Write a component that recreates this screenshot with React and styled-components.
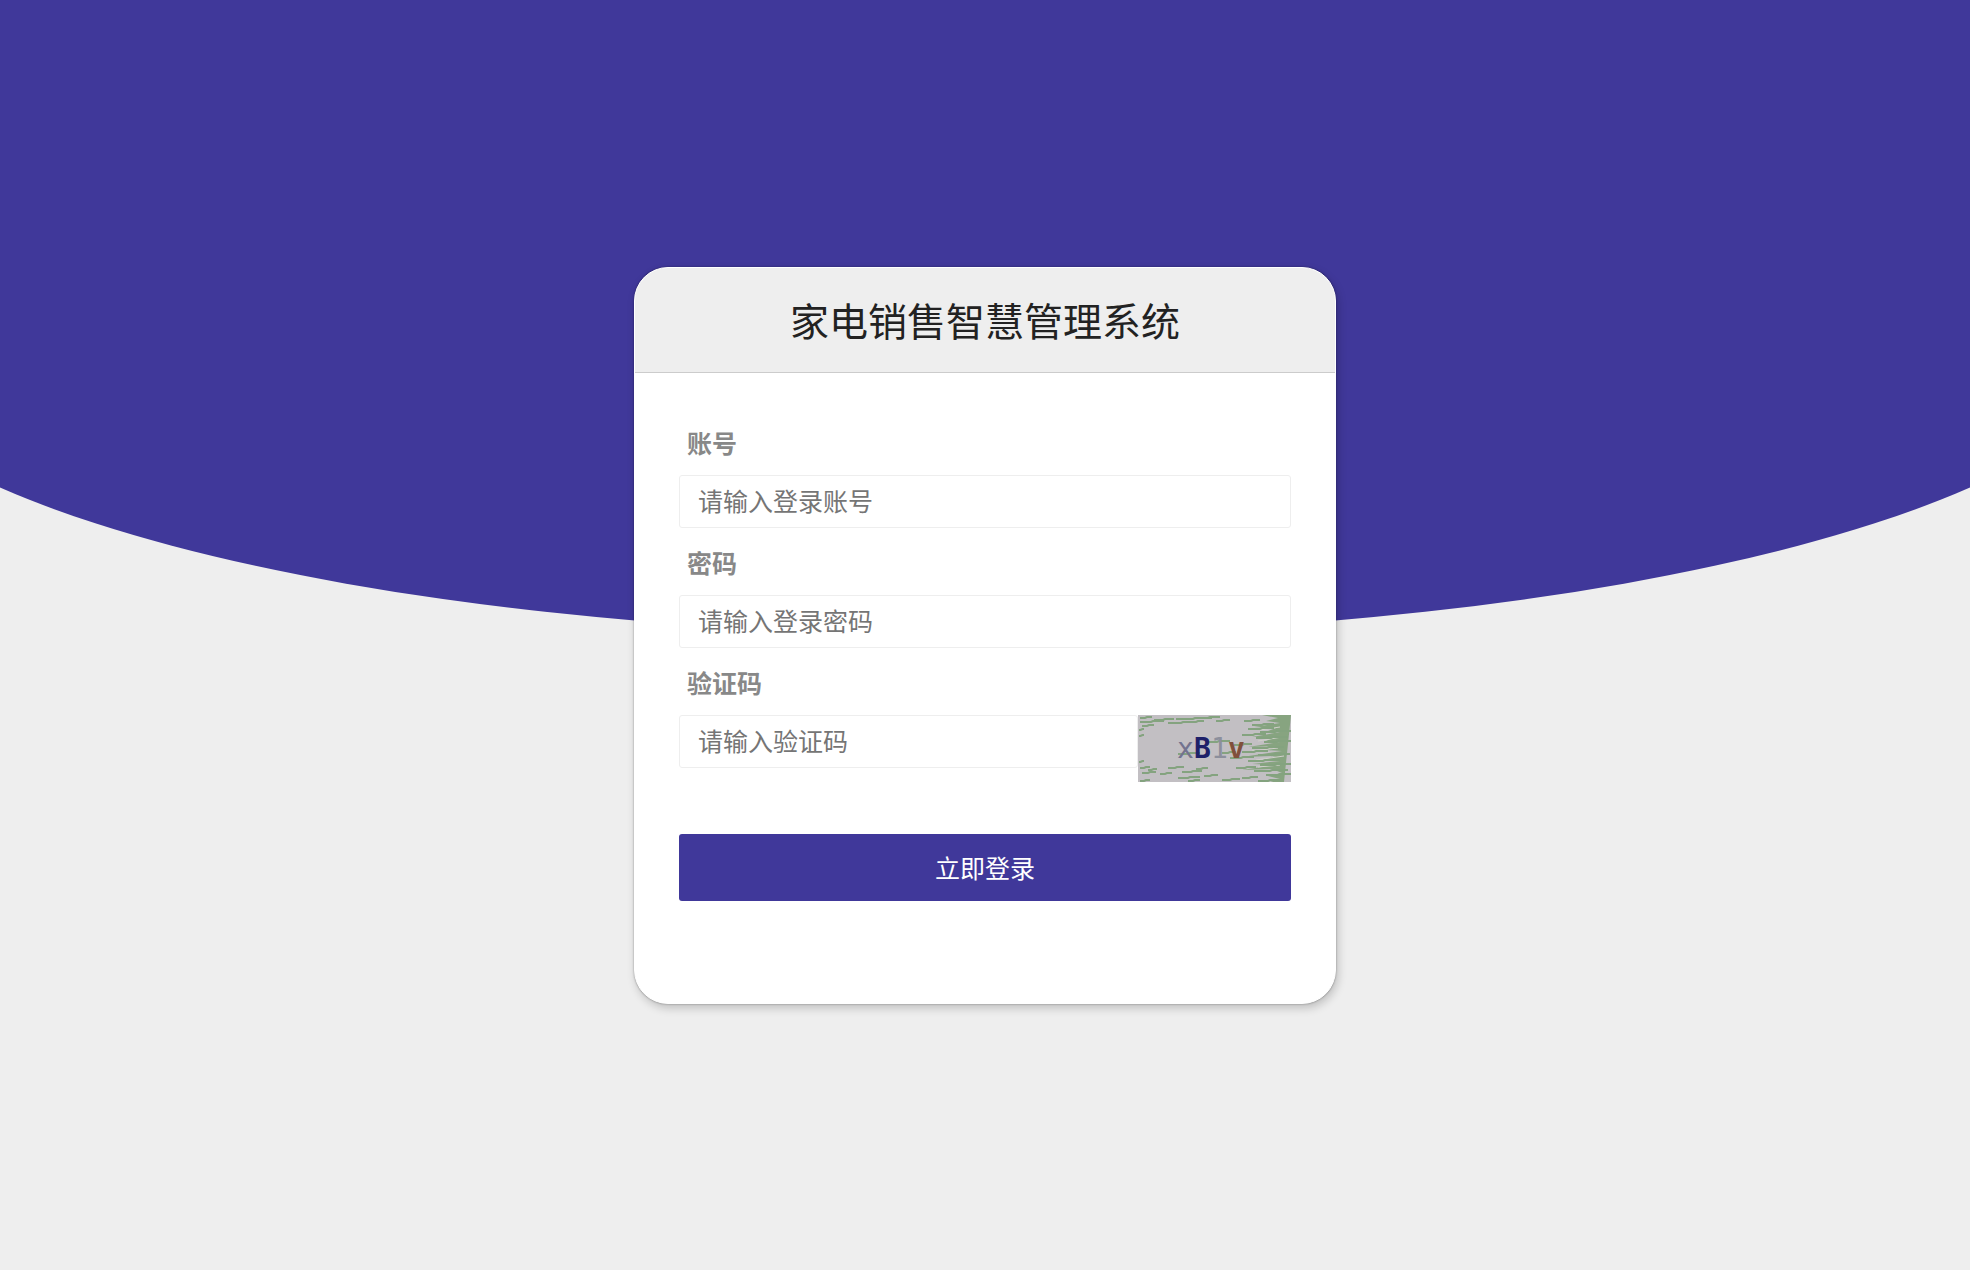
import React, { useState } from "react";
import styled, { createGlobalStyle } from "styled-components";

// Noise strokes of the captcha: [x, y, length]
const STREAKS = [
  [2, 2, 10], [2, 6, 22], [16, 4, 18], [30, 7, 26], [38, 3, 34], [52, 6, 12],
  [60, 2, 20], [4, 10, 10], [78, 5, 12], [106, 5, 14], [114, 9, 20],
  [110, 13, 24], [122, 16, 30], [104, 19, 22], [118, 22, 30], [126, 26, 26],
  [96, 29, 16], [114, 32, 30], [104, 36, 24], [120, 39, 30], [92, 42, 22],
  [110, 45, 30], [122, 49, 30], [98, 52, 18], [116, 55, 32], [128, 59, 24],
  [68, 26, 22], [40, 38, 20], [84, 37, 12], [2, 52, 8], [4, 57, 12],
  [10, 54, 7], [30, 52, 14], [22, 58, 10], [44, 56, 18], [58, 53, 10],
  [40, 62, 20], [66, 60, 12], [84, 64, 16], [104, 62, 14], [120, 65, 20],
  [2, 65, 8], [50, 65, 10], [1, 14, 3], [1, 20, 3], [1, 46, 3],
];

const LETTERS = [
  { char: "x", x: 39, weight: 400, color: "#73738f" },
  { char: "B", x: 56, weight: 700, color: "#1d2069" },
  { char: "1", x: 73, weight: 400, color: "#8c8f9c" },
  { char: "v", x: 90, weight: 700, color: "#80503c" },
];

const Captcha = () => (
  <CaptchaImage viewBox="0 0 153 67" preserveAspectRatio="none">
    <rect width="153" height="67" fill="#c2bfc3" />
    <path
      d="M153 0H124l16 3-12 3 14 2-26 4 22 1-8 3 12 1-28 5 24 0-10 4 14 1-32 5 30-1-12 4 16 1-40 6 34-1-10 3 14 2-28 3 24 1-34 5 30-1 10 4-14 3 12 3-10 3h14z"
      fill="#87a480"
    />
    <path
      d="M142 12l-20 3M144 22l-24 4M140 33l-26 3M146 41l-28 4M142 50l-22 2"
      stroke="#d0cfca"
      strokeWidth="1"
    />
    <g stroke="#84a37f" strokeWidth="2">
      {STREAKS.map(([x, y, length]) => (
        <path
          key={`${x}-${y}`}
          d={`M${x} ${y + 1}h${length / 2}l2 -1h${length / 2}`}
          fill="none"
        />
      ))}
    </g>
    {LETTERS.map(({ char, x, weight, color }) => (
      <CaptchaLetter key={char} x={x} y="43" fontWeight={weight} fill={color}>
        {char}
      </CaptchaLetter>
    ))}
  </CaptchaImage>
);

const App = () => {
  const [form, setForm] = useState({ account: "", password: "", code: "" });

  const handleChange = (e) => {
    setForm({ ...form, [e.target.name]: e.target.value });
  };

  return (
    <Page>
      <GlobalStyle />
      <Backdrop />
      <LoginCard>
        <CardHeader>
          <Title>家电销售智慧管理系统</Title>
        </CardHeader>
        <LoginForm onSubmit={(e) => e.preventDefault()}>
          <Label htmlFor="account">账号</Label>
          <Input
            id="account"
            name="account"
            placeholder="请输入登录账号"
            value={form.account}
            onChange={handleChange}
          />
          <Label htmlFor="password">密码</Label>
          <Input
            id="password"
            name="password"
            type="password"
            placeholder="请输入登录密码"
            value={form.password}
            onChange={handleChange}
          />
          <Label htmlFor="code">验证码</Label>
          <CodeRow>
            <Input
              id="code"
              name="code"
              placeholder="请输入验证码"
              value={form.code}
              onChange={handleChange}
            />
            <CaptchaButton type="button" aria-label="验证码">
              <Captcha />
            </CaptchaButton>
          </CodeRow>
          <SubmitButton type="submit">立即登录</SubmitButton>
        </LoginForm>
      </LoginCard>
    </Page>
  );
};

export default App;

const GlobalStyle = createGlobalStyle`
  * {
    box-sizing: border-box;
  }

  body {
    margin: 0;
    background: #eee;
    font-family: "Noto Sans CJK SC", sans-serif;
  }
`;

const Page = styled.div`
  position: relative;
  display: flex;
  align-items: center;
  justify-content: center;
  min-height: 100vh;
  overflow: hidden;
`;

// Purple half of the page, curved along its lower edge
const Backdrop = styled.div`
  position: absolute;
  top: 0;
  left: -8.4%;
  width: 116.8%;
  height: 50%;
  background: #40389a;
  border-radius: 0 0 50% 50% / 0 0 48% 48%;
`;

const LoginCard = styled.main`
  position: relative;
  width: 100%;
  max-width: 702px;
  background: #fff;
  border: 1px solid #fff;
  border-radius: 34px;
  box-shadow: 0 0 2px rgba(0, 0, 0, 0.4), 2px 4px 10px rgba(0, 0, 0, 0.2);
  overflow: hidden;
`;

const CardHeader = styled.header`
  display: flex;
  align-items: center;
  justify-content: center;
  height: 105px;
  background: #eee;
  border-bottom: 1px solid #ccc;
`;

const Title = styled.h1`
  margin: 0;
  padding-bottom: 2px;
  color: #222;
  font-size: 39px;
  font-weight: 400;
  line-height: 56px;
`;

const LoginForm = styled.form`
  display: flex;
  flex-direction: column;
  padding: 35px 44px 102px;
`;

const Label = styled.label`
  padding: 16px 8px 15px;
  color: #888;
  font-size: 25px;
  font-weight: 700;
  line-height: 36px;
`;

const Input = styled.input`
  width: 100%;
  min-width: 0;
  height: 53px;
  padding: 0 18px 2px;
  color: #555;
  background: #fff;
  border: 1px solid #eee;
  border-radius: 3px;
  font-family: inherit;
  font-size: 25px;
  outline: none;

  &::placeholder {
    color: #757575;
    opacity: 1;
  }
`;

const CodeRow = styled.div`
  display: grid;
  grid-template-columns: 3fr 1fr;
  align-items: start;
`;

const CaptchaButton = styled.button`
  height: 67px;
  padding: 0;
  background: none;
  border: 0;
  cursor: pointer;
`;

const CaptchaImage = styled.svg`
  display: block;
  width: 100%;
  height: 100%;
`;

const CaptchaLetter = styled.text`
  font-family: "DejaVu Sans Mono", monospace;
  font-size: 28px;
`;

const SubmitButton = styled.button`
  height: 67px;
  margin-top: 52px;
  color: #fff;
  background: #40389a;
  border: 0;
  border-radius: 3px;
  font-family: inherit;
  font-size: 25px;
  cursor: pointer;
`;
